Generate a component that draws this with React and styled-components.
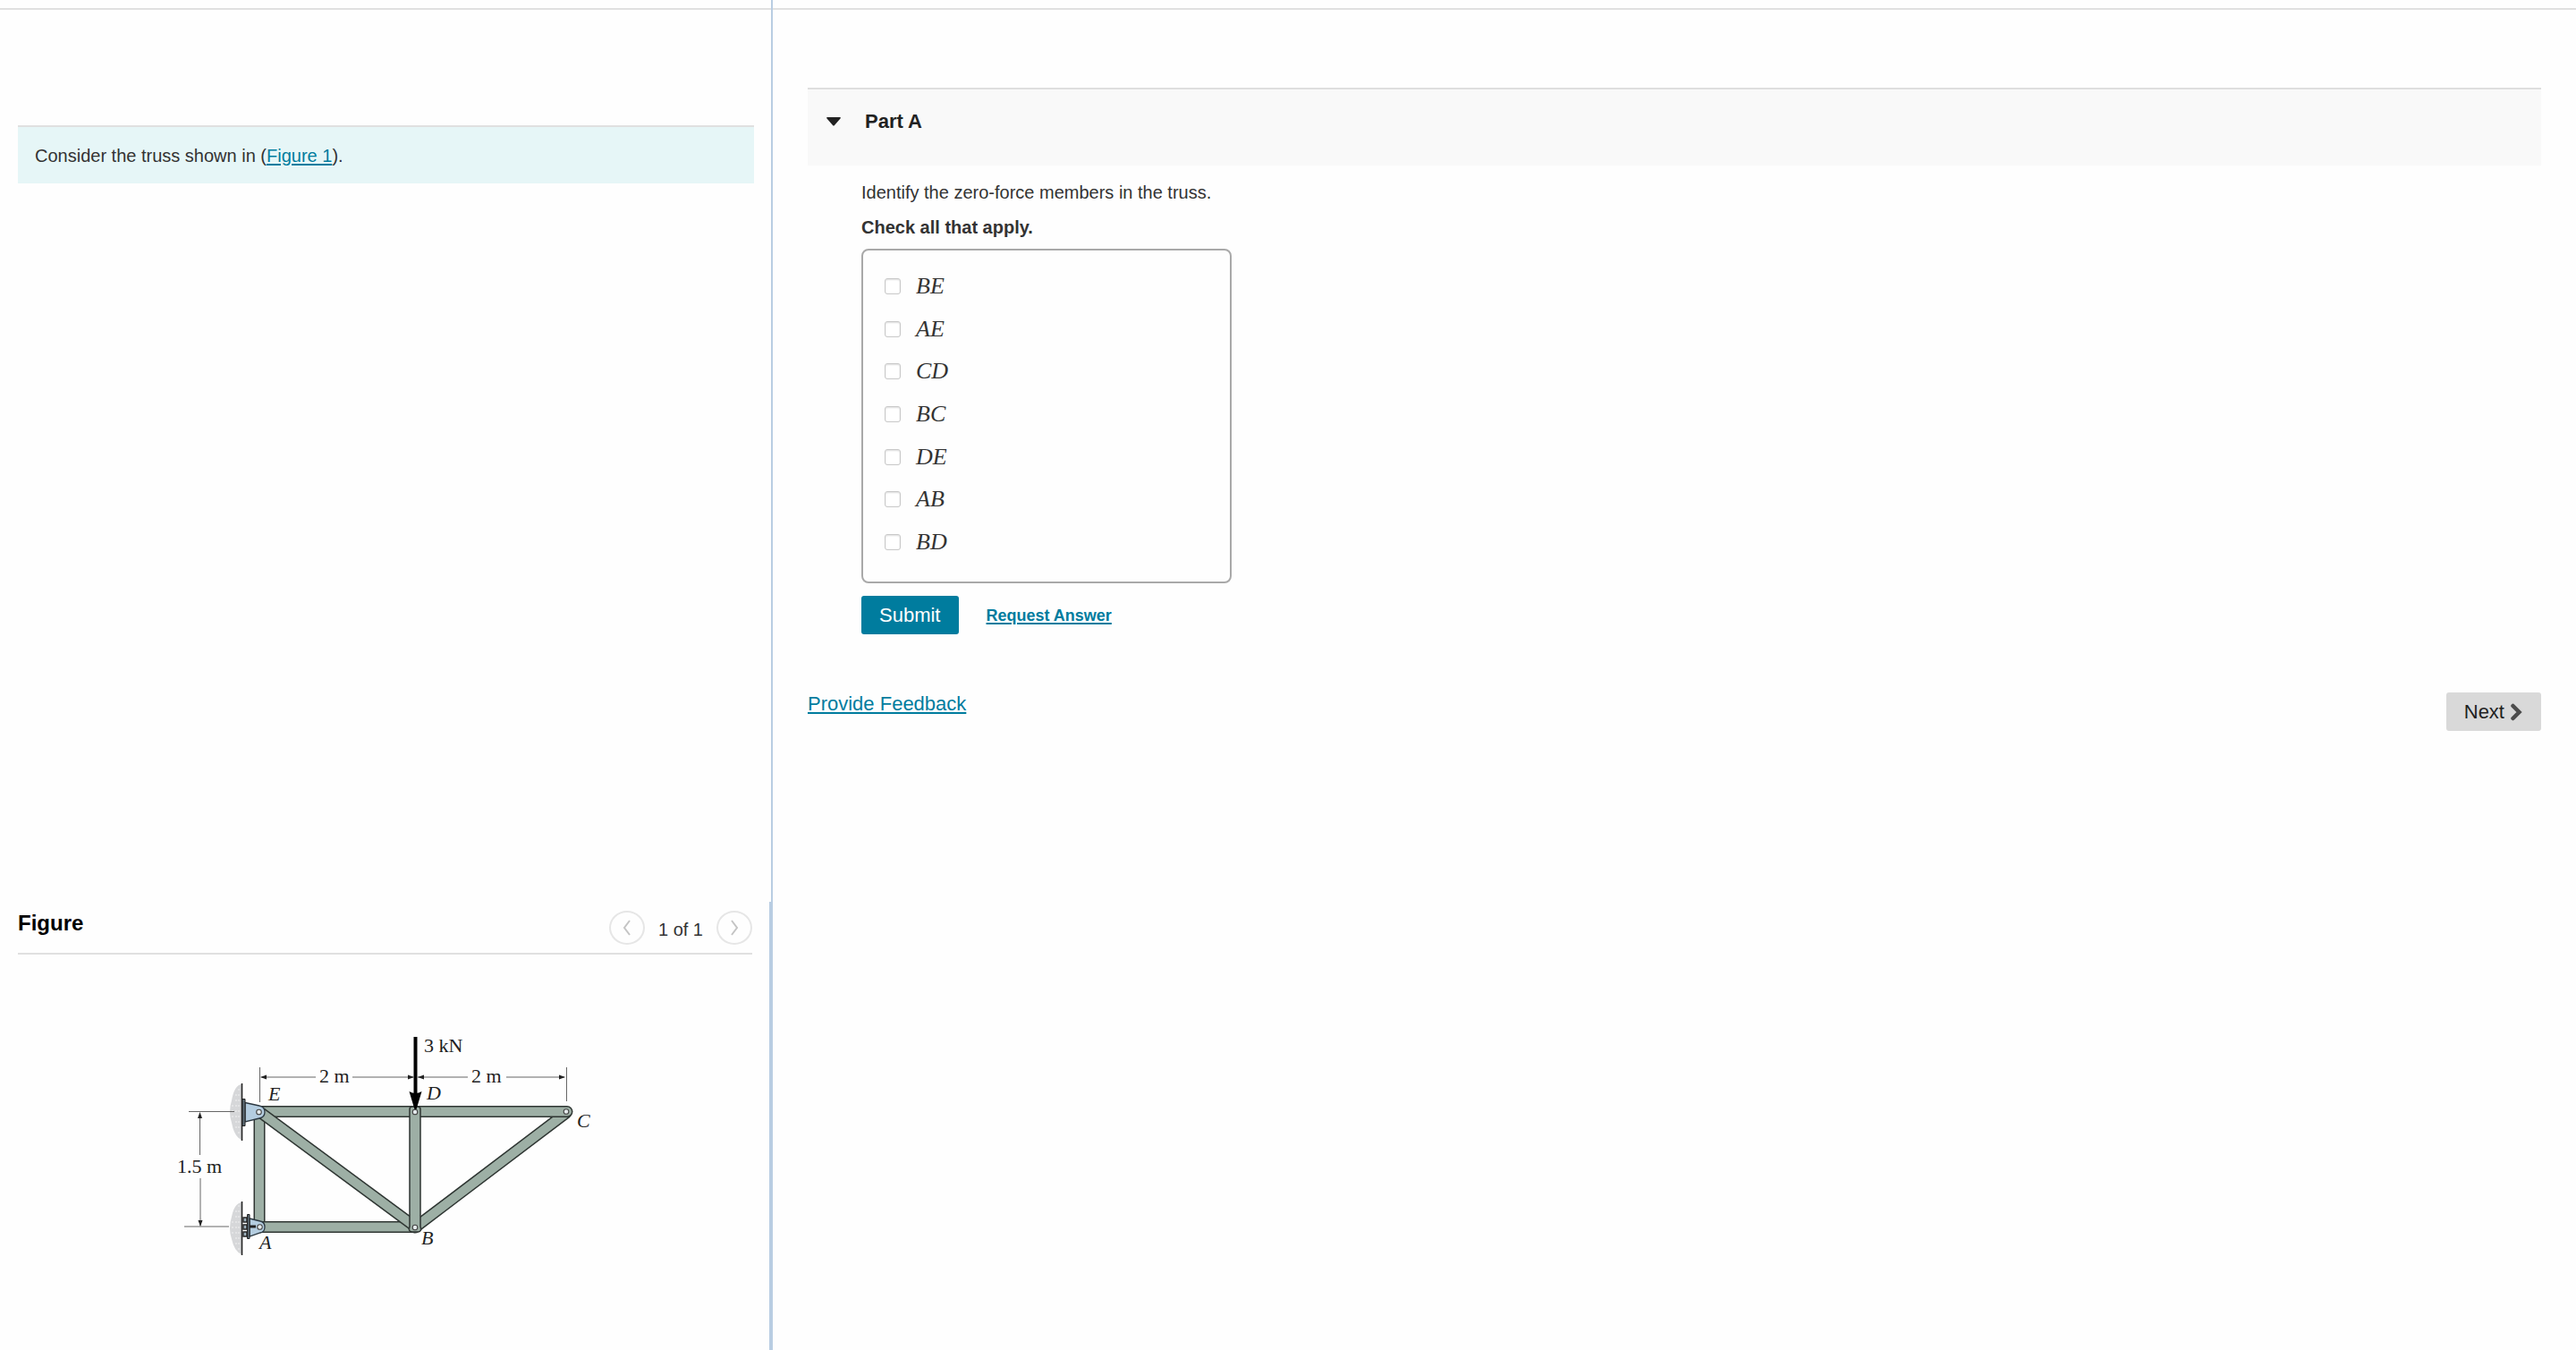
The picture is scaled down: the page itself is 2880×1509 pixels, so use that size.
import React, { useState } from "react";
import styled, { createGlobalStyle } from "styled-components";

const GlobalStyle = createGlobalStyle`
  * {
    box-sizing: border-box;
  }
  body {
    margin: 0;
    background-color: #fefefe;
    color: #333;
    font-family: "Liberation Sans", Arial, sans-serif;
    font-size: 20px;
    line-height: 24px;
  }
  a {
    color: #007c9e;
    text-decoration: underline;
    text-decoration-thickness: 2px;
    text-underline-offset: 2px;
  }
  h2, p {
    margin: 0;
  }
`;

const Page = styled.div`
  display: flex;
  min-height: 100vh;
`;

const Sidebar = styled.aside`
  display: flex;
  flex-direction: column;
  width: 30%;
`;

const Main = styled.main`
  flex: 1;
  min-width: 0;
`;

const Strip = styled.div`
  height: 11px;
  border-bottom: 2px solid #e0e0e0;
`;

const Problem = styled.section`
  flex: 1;
  border-right: 2px solid #b9cde2;
`;

const Intro = styled.p`
  margin: 129px 19px 0 20px;
  padding: 20px 19px 19px;
  border-top: 2px solid #e0e0e0;
  background-color: #e6f6f7;
`;

const FigurePanel = styled.section`
  height: 501px;
  padding: 10px 19px 0 20px;
  border-right: 4px solid #b9cde2;
`;

const FigureHeader = styled.div`
  display: flex;
  justify-content: space-between;
  height: 49px;
  border-bottom: 2px solid #e0e0e0;
`;

const FigureTitle = styled.h2`
  color: #000;
  font-size: 24px;
  line-height: 28px;
`;

const Pager = styled.div`
  display: flex;
  gap: 15px;
`;

const PagerText = styled.span`
  padding-top: 9px;
`;

const PagerButton = styled.button`
  display: flex;
  align-items: center;
  justify-content: center;
  width: 40px;
  height: 38px;
  padding: 0;
  border: 2px solid #e6e6e6;
  border-radius: 50%;
  background: none;
  color: #c4c4c4;
`;

const FigureBody = styled.div`
  display: flex;
  justify-content: center;
  padding-top: 73px;
`;

const Content = styled.div`
  padding: 87px 39px 0;
`;

const PartHeader = styled.div`
  height: 87px;
  padding: 23px 21px;
  border-top: 2px solid #dedede;
  background-color: #f9f9f9;
`;

const PartToggle = styled.button`
  display: flex;
  align-items: center;
  gap: 27px;
  padding: 0;
  border: none;
  background: none;
  color: #222;
  font: bold 22px/26px "Liberation Sans", Arial, sans-serif;
  cursor: pointer;
`;

const PartBody = styled.div`
  padding: 18px 60px 0;
`;

const Question = styled.p`
  margin-bottom: 15px;
`;

const Instruction = styled.p`
  font-weight: bold;
`;

const Answers = styled.div`
  display: flex;
  flex-direction: column;
  justify-content: space-between;
  width: 414px;
  height: 374px;
  margin-top: 12px;
  padding: 26px 24px 30px;
  border: 2px solid #a9a9a9;
  border-radius: 8px;
`;

const AnswerLabel = styled.label`
  display: flex;
  align-items: center;
  gap: 17px;
  height: 28px;
  font-family: "Liberation Serif", "Times New Roman", serif;
  font-size: 26px;
  font-style: italic;
  line-height: 28px;
  cursor: pointer;
`;

const Checkbox = styled.input`
  appearance: none;
  width: 18px;
  height: 18px;
  margin: 0;
  border: 1px solid #c8c8c8;
  border-radius: 3px;
  background-color: #fff;
  box-shadow: inset 0 1px 2px #ddd;
  &:checked {
    background-color: #007c9e;
  }
`;

const Actions = styled.div`
  display: flex;
  align-items: center;
  gap: 30px;
  margin-top: 14px;
`;

const Button = styled.button`
  display: flex;
  align-items: center;
  gap: 6px;
  height: 43px;
  padding: 0 21px 0 20px;
  border: none;
  border-radius: 3px;
  background-color: ${(props) => (props.$primary ? "#007c9e" : "#d9d9d9")};
  color: ${(props) => (props.$primary ? "#fff" : "#222")};
  font: 22px/26px "Liberation Sans", Arial, sans-serif;
  cursor: pointer;
`;

const RequestLink = styled.a`
  font-size: 18px;
  font-weight: bold;
`;

const Footer = styled.div`
  display: flex;
  justify-content: space-between;
  align-items: flex-start;
  padding-top: 65px;
`;

const FeedbackLink = styled.a`
  font-size: 22px;
  line-height: 26px;
`;

const members = ["BE", "AE", "CD", "BC", "DE", "AB", "BD"];

const Chevron = ({ left }) => (
  <svg width="12" height="18" viewBox="0 0 12 18" aria-hidden="true">
    <path
      d={left ? "M9 1 3 9l6 8" : "M3 1l6 8-6 8"}
      fill="none"
      stroke="currentColor"
      strokeWidth="2"
    />
  </svg>
);

const Beam = ({ x1, y1, x2, y2, cap = "butt" }) => (
  <g strokeLinecap={cap}>
    <path d={`M${x1} ${y1}L${x2} ${y2}`} stroke="#2e3532" strokeWidth="13" />
    <path d={`M${x1} ${y1}L${x2} ${y2}`} stroke="#9dafa5" strokeWidth="10" />
  </g>
);

const Pin = ({ x, y }) => (
  <circle cx={x} cy={y} r="2.8" fill="#e4eaec" stroke="#444" strokeWidth="1.1" />
);

// small dimension arrow head, pointing along the given angle
const Tip = ({ x, y, angle }) => (
  <path
    d="M0 0l-7-2.5v5z"
    fill="#222"
    transform={`translate(${x} ${y}) rotate(${angle})`}
  />
);

const Wall = ({ y, half }) => (
  <g>
    <path
      d={`M90 ${y - half}Q82 ${y - half + 1} 79 ${y - 13}Q75 ${y} 79 ${y + 12}Q82 ${
        y + half - 3
      } 90 ${y + half}z`}
      fill="#d6d7d9"
    />
    <path
      d={`M84 ${y - 20}v38M80 ${y - 8}v18M87 ${y - 26}v50`}
      stroke="#f0f0f1"
      strokeDasharray="2 4"
    />
    <path d={`M90.5 ${y - half - 1}v${half * 2 + 2}`} stroke="#222" strokeWidth="1.6" />
  </g>
);

const Truss = () => (
  <svg width="502" height="290" viewBox="0 0 502 290" role="img" aria-label="Truss">
    <Wall y={103} half={31} />
    <Wall y={233} half={29} />

    <g stroke="#666" strokeWidth="1" fill="none">
      <path d="M110.5 53v39M453.5 53v38M31 102.5h51M26 231h50" />
      <path d="M112 64h61M214 64h68M287 64h56M386 64h65M43.5 104v47M44 177v53" />
    </g>
    <Tip x={111} y={64} angle={180} />
    <Tip x={283} y={64} angle={0} />
    <Tip x={287} y={64} angle={180} />
    <Tip x={452} y={64} angle={0} />
    <Tip x={43.5} y={103} angle={-90} />
    <Tip x={44} y={231} angle={90} />

    <Beam x1={110} y1={103} x2={110} y2={231} />
    <Beam x1={110} y1={231.5} x2={284} y2={231.5} />
    <Beam x1={284} y1={232} x2={453} y2={104} cap="round" />
    <Beam x1={112} y1={102.5} x2={454} y2={102.5} cap="round" />
    <Beam x1={112} y1={104} x2={284} y2={231} />
    <path
      d="M278 100q0-3 3-3h6q3 0 3 3v131q2 6-3 6h-6q-5 0-3-6z"
      fill="#9dafa5"
      stroke="#2e3532"
      strokeWidth="1.5"
    />

    <path
      d="M94 92.5l16 3.5q6 1 6 7t-6 7l-16 4z"
      fill="#b4cde0"
      stroke="#2b3740"
      strokeWidth="1.3"
    />
    <path d="M91 88.5h3v30h-3z" fill="#5d6c76" stroke="#222" />
    <path
      d="M99 222l12 3q5 1 5 6.5t-5 6.5l-12 4z"
      fill="#b4cde0"
      stroke="#2b3740"
      strokeWidth="1.3"
    />
    <path d="M99 231h7" stroke="#222" strokeWidth="3" />
    <path d="M96.5 217.5h2.5v27h-2.5z" fill="#5d6c76" stroke="#222" />
    <path
      d="M92 221h4v5h-4zM92 229h4v5h-4zM92 237h4v5h-4z"
      fill="#9fb2bd"
      stroke="#222"
      strokeWidth="1.4"
    />

    <Pin x={109.5} y={103} />
    <Pin x={110.5} y={231.5} />
    <Pin x={284} y={103} />
    <Pin x={284} y={232} />
    <Pin x={453} y={102.5} />

    <path d="M284.5 19v66" stroke="#000" strokeWidth="4" />
    <path d="M277.5 80q7 4 14 0l-6 20h-2z" fill="#000" />

    <g fontFamily="'Liberation Serif', 'Times New Roman', serif" fontSize="22" fill="#222">
      <text x="294" y="36">3 kN</text>
      <text x="177" y="70">2 m</text>
      <text x="347" y="70">2 m</text>
      <text x="18" y="171">1.5 m</text>
      <g fontStyle="italic">
        <text x="120" y="90">E</text>
        <text x="297" y="89">D</text>
        <text x="465" y="120">C</text>
        <text x="110" y="256">A</text>
        <text x="291" y="251">B</text>
      </g>
    </g>
  </svg>
);

const App = () => {
  const [open, setOpen] = useState(true);

  return (
    <Page>
      <GlobalStyle />
      <Sidebar>
        <Problem>
          <Strip />
          <Intro>
            Consider the truss shown in (<a href="#figure">Figure 1</a>).
          </Intro>
        </Problem>
        <FigurePanel id="figure">
          <FigureHeader>
            <FigureTitle>Figure</FigureTitle>
            <Pager>
              <PagerButton aria-label="Previous figure">
                <Chevron left />
              </PagerButton>
              <PagerText>1 of 1</PagerText>
              <PagerButton aria-label="Next figure">
                <Chevron />
              </PagerButton>
            </Pager>
          </FigureHeader>
          <FigureBody>
            <Truss />
          </FigureBody>
        </FigurePanel>
      </Sidebar>

      <Main>
        <Strip />
        <Content>
          <PartHeader>
            <PartToggle aria-expanded={open} onClick={() => setOpen(!open)}>
              <svg width="16" height="10" viewBox="0 0 16 10" aria-hidden="true">
                <path d="M1 0h14q1.5.5.5 1.5L9 9q-1 1-2 0L.5 1.5Q-.5.5 1 0z" fill="#222" />
              </svg>
              Part A
            </PartToggle>
          </PartHeader>
          {open && (
            <PartBody>
              <Question>Identify the zero-force members in the truss.</Question>
              <Instruction>Check all that apply.</Instruction>
              <Answers>
                {members.map((member) => (
                  <AnswerLabel key={member}>
                    <Checkbox type="checkbox" name={member} />
                    {member}
                  </AnswerLabel>
                ))}
              </Answers>
              <Actions>
                <Button $primary>Submit</Button>
                <RequestLink href="#answer">Request Answer</RequestLink>
              </Actions>
            </PartBody>
          )}
          <Footer>
            <FeedbackLink href="#feedback">Provide Feedback</FeedbackLink>
            <Button>
              Next
              <svg width="14" height="20" viewBox="0 0 14 20" aria-hidden="true">
                <path
                  d="M3.5 3l7 7-7 7"
                  fill="none"
                  stroke="#4d4d4d"
                  strokeWidth="4.5"
                  strokeLinecap="round"
                />
              </svg>
            </Button>
          </Footer>
        </Content>
      </Main>
    </Page>
  );
};

export default App;
